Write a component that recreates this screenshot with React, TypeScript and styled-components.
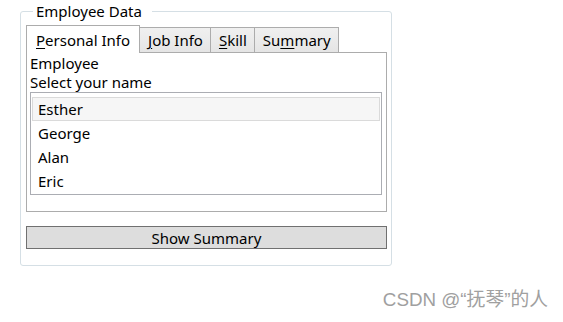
import React from "react";
import styled, { createGlobalStyle } from "styled-components";

const GlobalStyle = createGlobalStyle`
  html, body {
    margin: 0;
    padding: 0;
    background: #ffffff;
  }
  body {
    width: 563px;
    height: 322px;
    overflow: hidden;
    font-family: "Noto Sans", "Segoe UI", sans-serif;
    font-size: 15px;
    line-height: 18px;
    color: #000000;
  }
`;

const Page = styled.div`
  position: relative;
  width: 563px;
  height: 322px;
  box-sizing: border-box;
  padding: 2px 0 0 20px;
`;

const GroupBox = styled.fieldset`
  margin: 0;
  min-width: 0;
  width: 372px;
  box-sizing: border-box;
  border: 1px solid #d5dfe5;
  border-radius: 3px;
  padding: 5px 4px 16px 5px;
`;

const Legend = styled.legend`
  margin-left: 7px;
  padding: 0 10px 0 3px;
  line-height: 18px;
`;

const Body = styled.div`
  display: flex;
  flex-direction: column;
`;

const TabStrip = styled.div`
  display: flex;
  align-items: flex-end;
  height: 27px;
  position: relative;
  z-index: 1;
`;

const Tab = styled.div<{ $active?: boolean }>`
  box-sizing: border-box;
  display: flex;
  align-items: center;
  height: ${(p) => (p.$active ? "28px" : "25px")};
  margin-bottom: ${(p) => (p.$active ? "-1px" : "0")};
  padding: ${(p) => (p.$active ? "0 9px" : "0 7px 0 8px")};
  border: 1px solid #acacac;
  border-bottom: none;
  background: ${(p) => (p.$active ? "#ffffff" : "linear-gradient(#f0f0f0, #e5e5e5)")};
  white-space: nowrap;
  & + & {
    margin-left: -1px;
  }
`;

const Key = styled.span`
  text-decoration: underline;
  text-underline-offset: 2px;
  text-decoration-thickness: 1px;
`;

const Panel = styled.div`
  height: 160px;
  box-sizing: border-box;
  border: 1px solid #acacac;
  background: #ffffff;
  padding: 1px 4px 0 3px;
  display: flex;
  flex-direction: column;
`;

const Label = styled.div`
  line-height: 19px;
`;

const ListBox = styled.div`
  height: 103px;
  box-sizing: border-box;
  border: 1px solid #abadb3;
  padding: 4px 1px 0;
  display: flex;
  flex-direction: column;
`;

const Item = styled.div<{ $selected?: boolean }>`
  height: 24px;
  box-sizing: border-box;
  display: flex;
  align-items: center;
  padding: 0 5px;
  border: 1px solid ${(p) => (p.$selected ? "#dadada" : "transparent")};
  background: ${(p) => (p.$selected ? "#f6f6f6" : "transparent")};
`;

const Button = styled.button`
  margin-top: 14px;
  height: 23px;
  width: 100%;
  box-sizing: border-box;
  border: 1px solid #707070;
  border-radius: 0;
  background: #dddddd;
  padding: 0;
  font-family: inherit;
  font-size: 15px;
  line-height: 18px;
  color: #000000;
`;

const Watermark = styled.div`
  position: absolute;
  right: 15px;
  top: 290px;
  font-family: "Liberation Sans", "Noto Sans CJK SC", sans-serif;
  font-size: 18.8px;
  line-height: 20px;
  color: #a0a0a0;
  white-space: nowrap;
`;

const names = ["Esther", "George", "Alan", "Eric"];

export default function App() {
  return (
    <>
      <GlobalStyle />
      <Page>
        <GroupBox>
          <Legend>Employee Data</Legend>
          <Body>
            <TabStrip>
              <Tab $active>
                <Key>P</Key>ersonal Info
              </Tab>
              <Tab>
                <Key>J</Key>ob Info
              </Tab>
              <Tab>
                <Key>S</Key>kill
              </Tab>
              <Tab>
                Su<Key>m</Key>mary
              </Tab>
            </TabStrip>
            <Panel>
              <Label>Employee</Label>
              <Label>Select your name</Label>
              <ListBox>
                {names.map((n, i) => (
                  <Item key={n} $selected={i === 0}>
                    {n}
                  </Item>
                ))}
              </ListBox>
            </Panel>
            <Button>Show Summary</Button>
          </Body>
        </GroupBox>
        <Watermark>CSDN @“抚琴”的人</Watermark>
      </Page>
    </>
  );
}
